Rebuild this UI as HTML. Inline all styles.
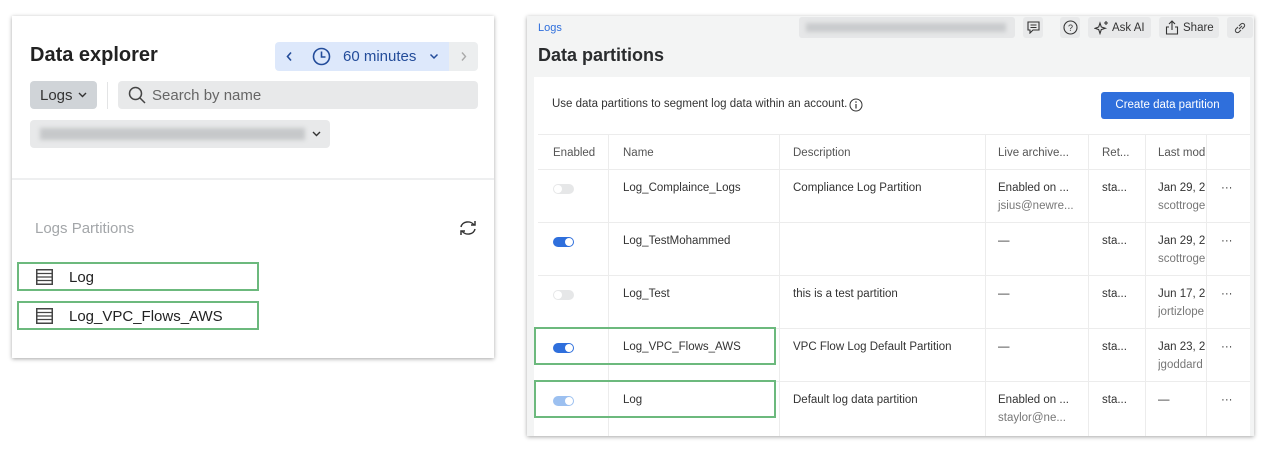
<!DOCTYPE html>
<html><head><meta charset="utf-8"><style>
*{box-sizing:border-box;margin:0;padding:0}
body{width:1278px;height:458px;background:#fff;position:relative;font-family:"Liberation Sans",sans-serif;overflow:hidden}
.a{position:absolute}
.lp{left:12px;top:16px;width:482px;height:342px;background:#fff;box-shadow:0 1px 4px rgba(0,0,0,.35)}
.rp{left:527px;top:16px;width:727px;height:420px;background:#f3f4f4;box-shadow:0 1px 4px rgba(0,0,0,.35)}
.t{font-size:11.5px;color:#333;white-space:nowrap}
.s{font-size:11.5px;color:#777;white-space:nowrap}
.vl{position:absolute;width:1px;background:#ececec}
.hl{position:absolute;height:1px;background:#ececec}
.tg{position:absolute;width:21px;height:10px;border-radius:5px;background:#e6e7e8}
.tg::after{content:"";position:absolute;top:1px;width:8px;height:8px;border-radius:50%;background:#fff;left:1px}
.tg.on{background:#2f6fdc}.tg.on::after{left:12px}
.tg.lt{background:#9cc0f0}.tg.lt::after{left:12px}
.gb{position:absolute;border:2px solid #6cb97d}
.btn{position:absolute;top:17px;height:21px;background:#e8e9ea;border-radius:3px;font-size:11.5px;color:#333;line-height:22px}
.dots{position:absolute;left:1221px;font-size:11.5px;color:#333}
</style></head><body>
<div class="a lp"></div>
<div class="a" style="left:30px;top:44px;font-size:20px;font-weight:bold;color:#222">Data explorer</div>
<div class="a" style="left:275px;top:42px;width:29px;height:29px;background:#dde8fb;border-radius:4px 0 0 4px"><svg class="a" style="left:10px;top:9px" width="9" height="11" viewBox="0 0 9 11"><path d="M6 1.5L2.5 5.5 6 9.5" fill="none" stroke="#234c9a" stroke-width="1.6"/></svg></div>
<div class="a" style="left:304px;top:42px;width:145px;height:29px;background:#dde8fb;color:#234c9a;font-size:15px;line-height:30px">
<svg class="a" style="left:8px;top:5px" width="19" height="19" viewBox="0 0 19 19"><circle cx="9.5" cy="9.5" r="8" fill="none" stroke="#234c9a" stroke-width="1.6"/><path d="M9.5 4.5v5.5h4" fill="none" stroke="#234c9a" stroke-width="1.6"/></svg>
<span class="a" style="left:39px">60 minutes</span><svg class="a" style="left:125px;top:11px" width="10" height="7" viewBox="0 0 10 7"><path d="M1.5 1.5L5 5l3.5-3.5" fill="none" stroke="#234c9a" stroke-width="1.5"/></svg></div>
<div class="a" style="left:449px;top:42px;width:29px;height:29px;background:#eceeef;border-radius:0 4px 4px 0"><svg class="a" style="left:10px;top:9px" width="9" height="11" viewBox="0 0 9 11"><path d="M3 1.5l3.5 4L3 9.5" fill="none" stroke="#aaa" stroke-width="1.4"/></svg></div>
<div class="a" style="left:30px;top:81px;width:67px;height:28px;background:#d0d4d8;border-radius:4px;font-size:15px;color:#333;line-height:29px;padding-left:10px">Logs<svg class="a" style="left:48px;top:11px" width="9" height="6" viewBox="0 0 9 6"><path d="M1 1l3.5 3.5L8 1" fill="none" stroke="#333" stroke-width="1.4"/></svg></div>
<div class="a" style="left:107px;top:82px;width:1px;height:27px;background:#e3e4e5"></div>
<div class="a" style="left:118px;top:81px;width:360px;height:28px;background:#e8e9ea;border-radius:4px;font-size:15px;color:#666;line-height:30px;padding-left:34px">Search by name
<svg class="a" style="left:10px;top:5px" width="18" height="18" viewBox="0 0 18 18"><circle cx="7.5" cy="7.5" r="6" fill="none" stroke="#444" stroke-width="1.5"/><path d="M12 12l5 5" stroke="#444" stroke-width="1.5"/></svg></div>
<div class="a" style="left:30px;top:120px;width:300px;height:28px;background:#e8e9ea;border-radius:4px"></div>
<div class="a" style="left:40px;top:128px;width:265px;height:12px;background:#c6c8ca;filter:blur(2px)"></div>
<svg class="a" style="left:312px;top:131px" width="9" height="6" viewBox="0 0 9 6"><path d="M1 1l3.5 3.5L8 1" fill="none" stroke="#333" stroke-width="1.4"/></svg>
<div class="a" style="left:12px;top:178px;width:482px;height:2px;background:#eeeff0"></div>
<div class="a" style="left:35px;top:220px;font-size:15px;color:#a3a6a9">Logs Partitions</div>
<svg class="a" style="left:458px;top:219px" width="20" height="18" viewBox="0 0 20 18"><path d="M3 8a7 6 0 0 1 13-2M17 10a7 6 0 0 1-13 2" fill="none" stroke="#333" stroke-width="1.5"/><path d="M13 6h4V2M7 12H3v4" fill="none" stroke="#333" stroke-width="1.5"/></svg>
<div class="gb" style="left:17px;top:262px;width:242px;height:29px"></div>
<div class="gb" style="left:17px;top:301px;width:242px;height:29px"></div>
<svg class="a" style="left:36px;top:269px" width="17" height="16" viewBox="0 0 17 16"><rect x="0.75" y="0.75" width="15.5" height="14.5" fill="none" stroke="#444" stroke-width="1.5"/><path d="M1 4.5h15M1 8h15M1 11.5h15" stroke="#444" stroke-width="1.3"/></svg>
<svg class="a" style="left:36px;top:308px" width="17" height="16" viewBox="0 0 17 16"><rect x="0.75" y="0.75" width="15.5" height="14.5" fill="none" stroke="#444" stroke-width="1.5"/><path d="M1 4.5h15M1 8h15M1 11.5h15" stroke="#444" stroke-width="1.3"/></svg>
<div class="a" style="left:69px;top:269px;font-size:15px;color:#222">Log</div>
<div class="a" style="left:69px;top:308px;font-size:15px;color:#222">Log_VPC_Flows_AWS</div>

<div class="a rp"></div>
<div class="a" style="left:538px;top:22px;font-size:11px;color:#2f6fdc">Logs</div>
<div class="a" style="left:799px;top:17px;width:216px;height:21px;background:#e6e7e8;border-radius:3px"></div>
<div class="a" style="left:806px;top:23px;width:200px;height:9px;background:#c9cbcd;filter:blur(2px)"></div>
<div class="btn" style="left:1023px;width:20px"><svg class="a" style="left:4px;top:4px" width="13" height="13" viewBox="0 0 13 13"><path d="M1 1h11v8H6l-3 3V9H1z M3.5 4h6M3.5 6.5h6" fill="none" stroke="#333" stroke-width="1.1"/></svg></div>
<div class="btn" style="left:1060px;width:20px"><svg class="a" style="left:3px;top:3px" width="15" height="15" viewBox="0 0 15 15"><circle cx="7.5" cy="7.5" r="6.5" fill="none" stroke="#333" stroke-width="1.1"/><text x="7.5" y="11" font-size="9" text-anchor="middle" fill="#333" font-family="Liberation Sans">?</text></svg></div>
<div class="btn" style="left:1088px;width:63px;padding-left:24px">Ask AI<svg class="a" style="left:6px;top:3px" width="15" height="15" viewBox="0 0 15 15"><path d="M6 3l1.3 4 4 1.3-4 1.3L6 13.5 4.7 9.6 1 8.3l3.7-1.3z M12 1v4M10 3h4" fill="none" stroke="#333" stroke-width="1.1"/></svg></div>
<div class="btn" style="left:1159px;width:60px;padding-left:24px">Share<svg class="a" style="left:6px;top:3px" width="14" height="15" viewBox="0 0 14 15"><path d="M7 1v9M4 4l3-3 3 3M4 7H1.5v7h11V7H10" fill="none" stroke="#333" stroke-width="1.1"/></svg></div>
<div class="btn" style="left:1227px;width:26px"><svg class="a" style="left:6px;top:4px" width="14" height="14" viewBox="0 0 14 14"><path d="M6 8l3-3M5 6L3 8a2 2 0 0 0 3 3l2-2M9 8l2-2a2 2 0 0 0-3-3L6 5" fill="none" stroke="#444" stroke-width="1.1"/></svg></div>
<div class="a" style="left:538px;top:45px;font-size:18px;font-weight:bold;color:#2a2c2e">Data partitions</div>
<div class="a" style="left:534px;top:77px;width:716px;height:359px;background:#fff"></div>
<div class="a t" style="left:552px;top:98px">Use data partitions to segment log data within an account.</div>
<svg class="a" style="left:849px;top:98px" width="14" height="14" viewBox="0 0 14 14"><circle cx="7" cy="7" r="6" fill="none" stroke="#333" stroke-width="1"/><path d="M7 6v4.5" stroke="#333" stroke-width="1.2"/><circle cx="7" cy="4" r=".8" fill="#333"/></svg>
<div class="a" style="left:1101px;top:92px;width:133px;height:27px;background:#2f6fdc;border-radius:3px;color:#fff;font-size:11.5px;text-align:center;line-height:27px">Create data partition</div>
<div class="hl" style="left:538px;top:134px;width:712px"></div>
<div class="vl" style="left:608px;top:134px;height:302px"></div>
<div class="vl" style="left:779px;top:134px;height:302px"></div>
<div class="vl" style="left:985px;top:134px;height:302px"></div>
<div class="vl" style="left:1088px;top:134px;height:302px"></div>
<div class="vl" style="left:1145px;top:134px;height:302px"></div>
<div class="vl" style="left:1206px;top:134px;height:302px"></div>
<div class="a t" style="left:553px;top:147px;color:#555">Enabled</div>
<div class="a t" style="left:623px;top:147px;color:#555">Name</div>
<div class="a t" style="left:793px;top:147px;color:#555">Description</div>
<div class="a t" style="left:998px;top:147px;color:#555">Live archive...</div>
<div class="a t" style="left:1102px;top:147px;color:#555">Ret...</div>
<div class="a t" style="left:1158px;top:147px;color:#555;width:47px;overflow:hidden">Last mod</div>
<div class="hl" style="left:538px;top:169px;width:712px"></div>
<div class="hl" style="left:538px;top:222px;width:712px"></div>
<div class="hl" style="left:538px;top:275px;width:712px"></div>
<div class="hl" style="left:538px;top:328px;width:712px"></div>
<div class="hl" style="left:538px;top:381px;width:712px"></div>

<div class="tg" style="left:553px;top:184px"></div>
<div class="a t" style="left:623px;top:182px">Log_Complaince_Logs</div>
<div class="a t" style="left:793px;top:182px">Compliance Log Partition</div>
<div class="a t" style="left:998px;top:182px">Enabled on ...</div><div class="a s" style="left:998px;top:200px">jsius@newre...</div>
<div class="a t" style="left:1102px;top:182px">sta...</div>
<div class="a t" style="left:1158px;top:182px;width:47px;overflow:hidden">Jan 29, 2024</div><div class="a s" style="left:1158px;top:200px;width:47px;overflow:hidden">scottroge</div>
<div class="dots" style="top:182px">···</div>

<div class="tg on" style="left:553px;top:237px"></div>
<div class="a t" style="left:623px;top:235px">Log_TestMohammed</div>
<div class="a t" style="left:998px;top:235px">—</div>
<div class="a t" style="left:1102px;top:235px">sta...</div>
<div class="a t" style="left:1158px;top:235px;width:47px;overflow:hidden">Jan 29, 2024</div><div class="a s" style="left:1158px;top:253px;width:47px;overflow:hidden">scottroge</div>
<div class="dots" style="top:235px">···</div>

<div class="tg" style="left:553px;top:290px"></div>
<div class="a t" style="left:623px;top:288px">Log_Test</div>
<div class="a t" style="left:793px;top:288px">this is a test partition</div>
<div class="a t" style="left:998px;top:288px">—</div>
<div class="a t" style="left:1102px;top:288px">sta...</div>
<div class="a t" style="left:1158px;top:288px;width:47px;overflow:hidden">Jun 17, 2024</div><div class="a s" style="left:1158px;top:306px;width:47px;overflow:hidden">jortizlope</div>
<div class="dots" style="top:288px">···</div>

<div class="tg on" style="left:553px;top:343px"></div>
<div class="a t" style="left:623px;top:341px">Log_VPC_Flows_AWS</div>
<div class="a t" style="left:793px;top:341px">VPC Flow Log Default Partition</div>
<div class="a t" style="left:998px;top:341px">—</div>
<div class="a t" style="left:1102px;top:341px">sta...</div>
<div class="a t" style="left:1158px;top:341px;width:47px;overflow:hidden">Jan 23, 2024</div><div class="a s" style="left:1158px;top:359px;width:47px;overflow:hidden">jgoddard</div>
<div class="dots" style="top:341px">···</div>

<div class="tg lt" style="left:553px;top:396px"></div>
<div class="a t" style="left:623px;top:394px">Log</div>
<div class="a t" style="left:793px;top:394px">Default log data partition</div>
<div class="a t" style="left:998px;top:394px">Enabled on ...</div><div class="a s" style="left:998px;top:412px">staylor@ne...</div>
<div class="a t" style="left:1102px;top:394px">sta...</div>
<div class="a t" style="left:1158px;top:394px">—</div>
<div class="dots" style="top:394px">···</div>

<div class="gb" style="left:534px;top:327px;width:242px;height:38px"></div>
<div class="gb" style="left:534px;top:380px;width:242px;height:38px"></div>
</body></html>
